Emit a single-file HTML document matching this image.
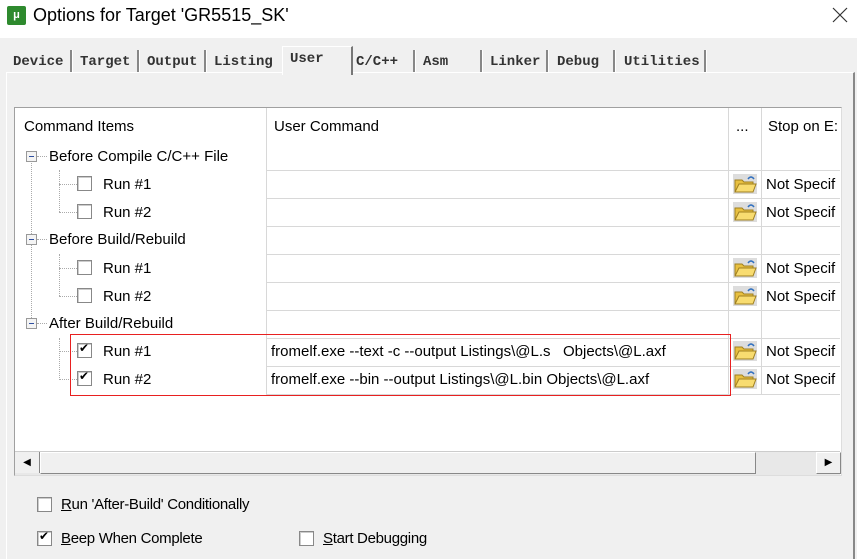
<!DOCTYPE html>
<html><head><style>
body{margin:0;width:857px;height:558px;overflow:hidden;background:#f0f0f0;font-family:"Segoe UI","Liberation Sans",sans-serif;position:relative}
.a{position:absolute}
.t{font-size:15px;color:#000;white-space:nowrap}
.tab{position:absolute;top:52px;height:21px;font-family:"Liberation Mono",monospace;font-size:14px;font-weight:bold;color:#333;line-height:20px}
.sep{position:absolute;top:50px;width:2px;height:22px;background:#888;border-right:1px solid #fff}
.hl{position:absolute;left:266px;width:574px;height:1px;background:#d8d8d8}
.cb{position:absolute;width:13px;height:13px;border:1px solid #888;background:#fff;box-shadow:inset 1px 1px 0 #ccc}
.cb.c::after{content:"✔";position:absolute;left:1px;top:-3px;font-size:12px;color:#000}
.dv{position:absolute;border-left:1px dotted #aaa}
.dh{position:absolute;border-top:1px dotted #aaa;height:0}
.pm{position:absolute;width:9px;height:9px;border:1px solid #999;background:#f4f4f4}
.pm::after{content:"";position:absolute;left:2px;top:4px;width:5px;height:1px;background:#3050a0}
.fold{position:absolute;left:733px;width:24px;height:20px}
.ns{position:absolute;left:766px;font-size:15px;white-space:nowrap;color:#000}
</style></head><body>
<div class="a" style="left:0;top:0;width:857px;height:38px;background:#fff"></div>
<div class="a" style="left:7px;top:6px;width:19px;height:19px;background:#2e8a2e;border-radius:2px;color:#fff;font-size:11px;font-weight:bold;text-align:center;line-height:19px">μ</div>
<div class="a t" style="left:33px;top:5px;font-size:18px">Options for Target 'GR5515_SK'</div>
<svg class="a" style="left:832px;top:7px" width="16" height="16"><path d="M1 1L15 15M15 1L1 15" stroke="#333" stroke-width="1.2"/></svg>

<div class="a" style="left:6px;top:72px;width:846px;height:486px;border-left:1px solid #fff;border-top:1px solid #fff;border-right:2px solid #888"></div>
<div class="a" style="left:282px;top:46px;width:68px;height:28px;background:#f0f0f0;border-top:1px solid #fff;border-left:1px solid #fff;border-right:2px solid #777"></div>
<div class="tab" style="left:13px">Device</div><div class="sep" style="left:70px"></div>
<div class="tab" style="left:80px">Target</div><div class="sep" style="left:137px"></div>
<div class="tab" style="left:147px">Output</div><div class="sep" style="left:204px"></div>
<div class="tab" style="left:214px">Listing</div>
<div class="tab" style="left:290px;top:49px">User</div>
<div class="tab" style="left:356px">C/C++</div><div class="sep" style="left:413px"></div>
<div class="tab" style="left:423px">Asm</div><div class="sep" style="left:480px"></div>
<div class="tab" style="left:490px">Linker</div><div class="sep" style="left:546px"></div>
<div class="tab" style="left:557px">Debug</div><div class="sep" style="left:613px"></div>
<div class="tab" style="left:624px">Utilities</div><div class="sep" style="left:704px"></div>

<div class="a" style="left:14px;top:107px;width:826px;height:367px;background:#fff;border:1px solid #a0a0a0;border-right-color:#ddd;border-bottom-color:#ddd"></div>
<div class="a" style="left:266px;top:108px;width:1px;height:286px;background:#d8d8d8"></div>
<div class="a" style="left:728px;top:108px;width:1px;height:286px;background:#d8d8d8"></div>
<div class="a" style="left:761px;top:108px;width:1px;height:286px;background:#d8d8d8"></div>
<div class="hl" style="top:170px"></div><div class="hl" style="top:198px"></div><div class="hl" style="top:226px"></div><div class="hl" style="top:254px"></div><div class="hl" style="top:282px"></div><div class="hl" style="top:310px"></div><div class="hl" style="top:338px"></div><div class="hl" style="top:366px"></div><div class="hl" style="top:394px"></div>

<div class="a t" style="left:24px;top:118px">Command Items</div>
<div class="a t" style="left:274px;top:118px">User Command</div>
<div class="a t" style="left:736px;top:118px">...</div>
<div class="a t" style="left:768px;top:118px">Stop on E:</div>

<div class="dv" style="left:31px;top:160px;height:168px"></div>
<div class="dv" style="left:59px;top:170px;height:42px"></div>
<div class="dv" style="left:59px;top:254px;height:42px"></div>
<div class="dv" style="left:59px;top:338px;height:42px"></div>
<div class="pm" style="left:26px;top:151px"></div><div class="dh" style="left:37px;top:156px;width:10px"></div>
<div class="pm" style="left:26px;top:234px"></div><div class="dh" style="left:37px;top:239px;width:10px"></div>
<div class="pm" style="left:26px;top:318px"></div><div class="dh" style="left:37px;top:323px;width:10px"></div>
<div class="a t" style="left:49px;top:148px">Before Compile C/C++ File</div>
<div class="a t" style="left:49px;top:231px">Before Build/Rebuild</div>
<div class="a t" style="left:49px;top:315px">After Build/Rebuild</div>

<div class="dh" style="left:59px;top:184px;width:18px"></div><div class="cb" style="left:77px;top:176px"></div><div class="a t" style="left:103px;top:176px">Run #1</div>
<div class="dh" style="left:59px;top:212px;width:18px"></div><div class="cb" style="left:77px;top:204px"></div><div class="a t" style="left:103px;top:204px">Run #2</div>
<div class="dh" style="left:59px;top:268px;width:18px"></div><div class="cb" style="left:77px;top:260px"></div><div class="a t" style="left:103px;top:260px">Run #1</div>
<div class="dh" style="left:59px;top:296px;width:18px"></div><div class="cb" style="left:77px;top:288px"></div><div class="a t" style="left:103px;top:288px">Run #2</div>
<div class="dh" style="left:59px;top:351px;width:18px"></div><div class="cb c" style="left:77px;top:343px"></div><div class="a t" style="left:103px;top:343px">Run #1</div>
<div class="dh" style="left:59px;top:379px;width:18px"></div><div class="cb c" style="left:77px;top:371px"></div><div class="a t" style="left:103px;top:371px">Run #2</div>

<div class="a t" style="left:271px;top:343px">fromelf.exe --text -c --output Listings\@L.s&nbsp;&nbsp; Objects\@L.axf</div>
<div class="a t" style="left:271px;top:371px">fromelf.exe --bin --output Listings\@L.bin Objects\@L.axf</div>
<div class="a" style="left:70px;top:334px;width:659px;height:60px;border:1px solid #e82020"></div>

<svg class="fold" style="top:174px" viewBox="0 0 24 20"><rect x="0" y="0" width="24" height="20" fill="#ddd"/><path d="M2 6h7l2 2h9v10H2z" fill="#e8c040" stroke="#a08020"/><path d="M2 18l4-8h17l-3 8z" fill="#f8dc70" stroke="#a08020"/><path d="M15 5q3-4 6 0" fill="none" stroke="#3070c0" stroke-width="1.5"/></svg>
<svg class="fold" style="top:202px" viewBox="0 0 24 20"><rect x="0" y="0" width="24" height="20" fill="#ddd"/><path d="M2 6h7l2 2h9v10H2z" fill="#e8c040" stroke="#a08020"/><path d="M2 18l4-8h17l-3 8z" fill="#f8dc70" stroke="#a08020"/><path d="M15 5q3-4 6 0" fill="none" stroke="#3070c0" stroke-width="1.5"/></svg>
<svg class="fold" style="top:258px" viewBox="0 0 24 20"><rect x="0" y="0" width="24" height="20" fill="#ddd"/><path d="M2 6h7l2 2h9v10H2z" fill="#e8c040" stroke="#a08020"/><path d="M2 18l4-8h17l-3 8z" fill="#f8dc70" stroke="#a08020"/><path d="M15 5q3-4 6 0" fill="none" stroke="#3070c0" stroke-width="1.5"/></svg>
<svg class="fold" style="top:286px" viewBox="0 0 24 20"><rect x="0" y="0" width="24" height="20" fill="#ddd"/><path d="M2 6h7l2 2h9v10H2z" fill="#e8c040" stroke="#a08020"/><path d="M2 18l4-8h17l-3 8z" fill="#f8dc70" stroke="#a08020"/><path d="M15 5q3-4 6 0" fill="none" stroke="#3070c0" stroke-width="1.5"/></svg>
<svg class="fold" style="top:341px" viewBox="0 0 24 20"><rect x="0" y="0" width="24" height="20" fill="#ddd"/><path d="M2 6h7l2 2h9v10H2z" fill="#e8c040" stroke="#a08020"/><path d="M2 18l4-8h17l-3 8z" fill="#f8dc70" stroke="#a08020"/><path d="M15 5q3-4 6 0" fill="none" stroke="#3070c0" stroke-width="1.5"/></svg>
<svg class="fold" style="top:369px" viewBox="0 0 24 20"><rect x="0" y="0" width="24" height="20" fill="#ddd"/><path d="M2 6h7l2 2h9v10H2z" fill="#e8c040" stroke="#a08020"/><path d="M2 18l4-8h17l-3 8z" fill="#f8dc70" stroke="#a08020"/><path d="M15 5q3-4 6 0" fill="none" stroke="#3070c0" stroke-width="1.5"/></svg>
<div class="ns" style="top:176px">Not Specif</div>
<div class="ns" style="top:204px">Not Specif</div>
<div class="ns" style="top:260px">Not Specif</div>
<div class="ns" style="top:288px">Not Specif</div>
<div class="ns" style="top:343px">Not Specif</div>
<div class="ns" style="top:371px">Not Specif</div>

<div class="a" style="left:15px;top:451px;width:825px;height:23px;background:#e8e8e8;border-top:1px solid #ccc"></div>
<div class="a" style="left:15px;top:452px;width:24px;height:21px;background:#f0f0f0;border-right:1px solid #888;font-size:10px;line-height:21px;text-align:center">◀</div>
<div class="a" style="left:40px;top:452px;width:714px;height:20px;background:#f0f0f0;border:1px solid #fff;border-right-color:#888;border-bottom-color:#888"></div>
<div class="a" style="left:816px;top:452px;width:23px;height:20px;background:#f0f0f0;border:1px solid #fff;border-right-color:#888;border-bottom-color:#888;font-size:10px;line-height:20px;text-align:center">▶</div>

<div class="cb" style="left:37px;top:497px"></div>
<div class="a t" style="left:61px;top:496px;letter-spacing:-0.3px"><u>R</u>un 'After-Build' Conditionally</div>
<div class="cb c" style="left:37px;top:531px"></div>
<div class="a t" style="left:61px;top:530px;letter-spacing:-0.3px"><u>B</u>eep When Complete</div>
<div class="cb" style="left:299px;top:531px"></div>
<div class="a t" style="left:323px;top:530px;letter-spacing:-0.3px"><u>S</u>tart Debugging</div>
</body></html>
